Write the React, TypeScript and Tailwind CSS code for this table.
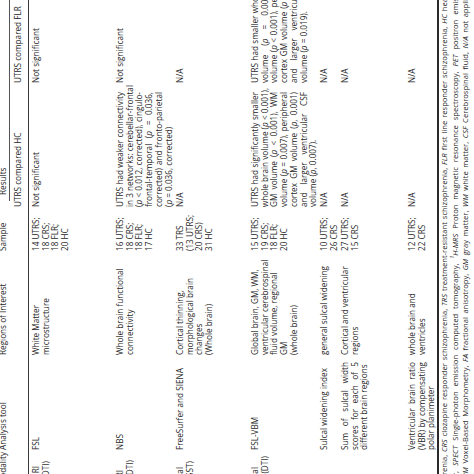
import React from "react";

type Line = React.ReactNode;

const GRID = "grid grid-cols-[35px_95px_104px_44px_124px_240px]";

const P = () => <i>p</i>;

function Lines({ lines, w, j }: { lines: Line[]; w?: string; j?: boolean }) {
  return (
    <div className={w}>
      {lines.map((l, i) => (
        <div
          key={i}
          className={
            j && i < lines.length - 1
              ? "whitespace-nowrap text-justify [text-align-last:justify]"
              : "whitespace-nowrap"
          }
        >
          {l}
        </div>
      ))}
    </div>
  );
}

function Mod({ lines }: { lines: [string, string][] }) {
  return (
    <div>
      {lines.map(([t, w], i) => (
        <div key={i} className={w + " flex justify-end"}>
          <span className="whitespace-nowrap">{t}</span>
        </div>
      ))}
    </div>
  );
}

type RowData = {
  h: string;
  mod: [string, string][];
  tool: Line[];
  toolJ?: boolean;
  roi: Line[];
  sample: Line[];
  hc: Line[];
  flr: Line[];
};

const rows: RowData[] = [
  {
    h: "h-[84px]",
    mod: [
      ["MRI", "w-[19px]"],
      ["(DTI)", "w-[24px]"],
    ],
    tool: ["FSL"],
    roi: ["White Matter", "microstructure"],
    sample: ["14 UTRS;", "18 CRS;", "18 FLR;", "20 HC"],
    hc: ["Not significant"],
    flr: ["Not significant"],
  },
  {
    h: "h-[60px]",
    mod: [
      ["fMRI", "w-[15px]"],
      ["(DTI)", "w-[25px]"],
    ],
    tool: ["NBS"],
    roi: ["Whole brain functional", "connectivity"],
    sample: ["16 UTRS;", "18 CRS;", "18 FLR;", "17 HC"],
    hc: [
      "UTRS had weaker connectivity",
      "in 3 networks: cerebellar-frontal",
      <>
        (<P /> &lt; 0.012, corrected), cingulo-
      </>,
      <>
        frontal-temporal (<P /> = 0.036,
      </>,
      "corrected) and fronto-parietal",
      <>
        (<P /> = 0.036, corrected)
      </>,
    ],
    flr: ["Not significant"],
  },
  {
    h: "h-[75px]",
    mod: [
      ["Structural", "w-[18px]"],
      ["(SST)", "w-[24px]"],
    ],
    tool: ["FreeSurfer and SIENA"],
    roi: ["Cortical thinning,", "morphological brain", "changes", "(Whole brain)"],
    sample: ["33 TRS", "(13 UTRS;", "20 CRS)", "31 HC"],
    hc: ["N/A"],
    flr: ["N/A"],
  },
  {
    h: "h-[69px]",
    mod: [
      ["Structural", "w-[18px]"],
      ["(DTI)", "w-[29px]"],
    ],
    tool: ["FSL-VBM"],
    roi: [
      "Global brain, GM, WM,",
      "ventricular cerebrospinal",
      "fluid volume, regional",
      "GM",
      "(whole brain)",
    ],
    sample: ["15 UTRS;", "19 CRS;", "18 FLR;", "20 HC"],
    hc: [
      "UTRS had significantly smaller",
      <>
        whole brain volume (<P /> &lt; 0.001),
      </>,
      <>
        GM volume (<P /> &lt; 0.001), WM
      </>,
      <>
        volume (<P /> = 0.007), peripheral
      </>,
      <>
        cortex GM volume (<P />, 0.001)
      </>,
      "and larger ventricular CSF",
      <>
        volume (<P />, 0.007).
      </>,
    ],
    flr: [
      "UTRS had smaller whole brain",
      <>
        volume (<P /> = 0.002), GM
      </>,
      <>
        volume (<P /> &lt; 0.001), peripheral
      </>,
      <>
        cortex GM volume (<P /> &lt; 0.001)
      </>,
      "and larger ventricular CSF",
      <>
        volume (<P /> = 0.019).
      </>,
    ],
  },
  {
    h: "h-[21px]",
    mod: [],
    tool: ["Sulcal widening index"],
    roi: ["general sulcal widening"],
    sample: ["10 UTRS;", "26 CRS"],
    hc: ["N/A"],
    flr: ["N/A"],
  },
  {
    h: "h-[67px]",
    mod: [],
    tool: ["Sum of sulcal width", "scores for each of 5", "different brain regions"],
    toolJ: true,
    roi: ["Cortical and ventricular", "regions"],
    sample: ["27 UTRS;", "15 CRS"],
    hc: ["N/A"],
    flr: ["N/A"],
  },
  {
    h: "h-[32px]",
    mod: [],
    tool: ["Ventricular brain ratio", "(VBR) by compensating", "polar planimeter"],
    toolJ: true,
    roi: ["whole brain and", "ventricles"],
    sample: ["12 UTRS;", "22 CRS"],
    hc: ["N/A"],
    flr: ["N/A"],
  },
];

function Row({ r }: { r: RowData }) {
  return (
    <div className={GRID + " pt-[2px] " + r.h}>
      <Mod lines={r.mod} />
      <Lines lines={r.tool} w="w-[88px]" j={r.toolJ} />
      <Lines lines={r.roi} />
      <Lines lines={r.sample} />
      <Lines lines={r.hc} w="w-[115px]" j />
      <Lines lines={r.flr} w="w-[115px]" j />
    </div>
  );
}

export default function App() {
  return (
    <div className="w-[474px] h-[474px] overflow-hidden bg-white">
      <div className="w-[474px] h-[474px] -rotate-90 overflow-hidden bg-white text-[#262626] font-['Open_Sans','Liberation_Sans',sans-serif] text-[8.2px] leading-[9.7px]">
        <div className="w-[660px] ml-[-11px] mt-[-2px]">
          <div className={GRID + " h-[11px]"}>
            <div className="whitespace-nowrap">Modality</div>
            <div className="whitespace-nowrap">Analysis tool</div>
            <div className="whitespace-nowrap">Regions of Interest</div>
            <div className="whitespace-nowrap">Sample</div>
            <div className="col-span-2 pl-[12px] whitespace-nowrap">Results</div>
          </div>
          <div className={GRID + " h-[1px]"}>
            <div className="col-start-5 col-span-2 ml-[6px] border-t border-[#555]" />
          </div>
          <div className={GRID + " h-[18px] pt-[3px]"}>
            <div className="col-start-5 whitespace-nowrap">UTRS compared HC</div>
            <div className="whitespace-nowrap">UTRS compared FLR</div>
          </div>
          <div className="border-t border-[#3a3a3a]" />
          {rows.map((r, i) => (
            <Row key={i} r={r} />
          ))}
          <div className="border-t-2 border-[#2a2a2a]" />
          <div className="ml-[11px] text-[7.6px] leading-[10.5px]">
            <div className="w-[477px] ml-[-1px] whitespace-nowrap text-justify [text-align-last:justify]">
              renia, <i>CRS</i> clozapine responder schizophrenia, <i>TRS</i> treatment-resistant
              schizophrenia, <i>FLR</i> first line responder schizophrenia, <i>HC</i> hea
            </div>
            <div className="w-[478px] ml-[-2px] whitespace-nowrap text-justify [text-align-last:justify]">
              r, <i>SPECT</i> Single-photon emission computed tomography,{" "}
              <i>
                <span className="text-[5px] align-super leading-[0]">1</span>H-MRS
              </i>{" "}
              Proton magnetic resonance spectroscopy, <i>PET</i> positron emis
            </div>
            <div className="w-[478px] ml-[-4px] whitespace-nowrap text-justify [text-align-last:justify]">
              <i>BM</i> Voxel-Based Morphometry, <i>FA</i> fractional anisotropy, <i>GM</i> gray
              matter, <i>WM</i> white matter, <i>CSF</i> Cerebrospinal fluid, <i>N/A</i> not appli
            </div>
          </div>
        </div>
      </div>
    </div>
  );
}
